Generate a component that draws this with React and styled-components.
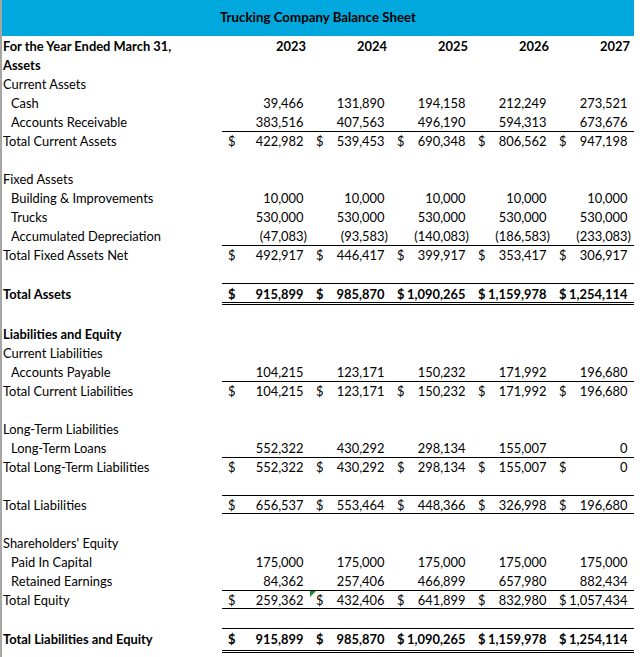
import React from "react";
import styled, { createGlobalStyle } from "styled-components";

const Global = createGlobalStyle`
  html, body { margin: 0; padding: 0; background: #ffffff; }
  body { font-family: Lato, "Open Sans", "Liberation Sans", sans-serif; color: #000; }
`;

const Sheet = styled.div`
  width: 632px;
  min-height: 657px;
  border-left: 2px solid #a6a6a6;
  font-size: 12.9px;
  line-height: 1;
`;

const TitleBar = styled.div`
  height: 36px;
  background: #00a8de;
  display: flex;
  align-items: center;
  justify-content: center;
  font-weight: 700;
  font-size: 13.3px;
  padding-bottom: 1px;
  box-sizing: border-box;
`;

const Row = styled.div`
  display: grid;
  grid-template-columns: 220px 88px repeat(4, 81px);
  height: ${(p) => p.$h || 19}px;
  font-weight: ${(p) => (p.$bold ? 700 : 400)};
`;

const Cell = styled.div`
  position: relative;
  box-sizing: border-box;
  display: flex;
  align-items: center;
  white-space: nowrap;
  padding-top: 2px;
  border-top: 1px solid ${(p) => (p.$top && p.$lined ? "#000" : "transparent")};
  border-bottom: ${(p) => (p.$bottom === "double" ? "3px double" : "1px solid")}
    ${(p) => (p.$bottom && p.$lined ? "#000" : "transparent")};
  padding-bottom: ${(p) => p.$pb || 0}px;
`;

const Label = styled(Cell)`
  padding-left: ${(p) => (p.$indent ? 9 : 1)}px;
`;

const YearCell = styled(Cell)`
  justify-content: flex-end;
  padding-right: 4px;
`;

const Amount = styled(Cell)`
  padding-left: 6px;
  padding-right: 3px;
`;

const Dollar = styled.span``;

const Num = styled.span`
  margin-left: auto;
`;

const Ghost = styled.span`
  visibility: hidden;
`;

const ErrorMark = styled.span`
  position: absolute;
  left: 0;
  top: 0;
  width: 0;
  height: 0;
  border-top: 6px solid #1f8a3c;
  border-right: 6px solid transparent;
`;

const years = [2023, 2024, 2025, 2026, 2027];

const rows = [
  { type: "header" },
  { label: "Assets", bold: true },
  { label: "Current Assets" },
  { label: "Cash", indent: true, values: ["39,466", "131,890", "194,158", "212,249", "273,521"] },
  { label: "Accounts Receivable", indent: true, values: ["383,516", "407,563", "496,190", "594,313", "673,676"] },
  { label: "Total Current Assets", top: true, dollar: true, values: ["422,982", "539,453", "690,348", "806,562", "947,198"] },
  {},
  { label: "Fixed Assets" },
  { label: "Building & Improvements", indent: true, values: ["10,000", "10,000", "10,000", "10,000", "10,000"] },
  { label: "Trucks", indent: true, values: ["530,000", "530,000", "530,000", "530,000", "530,000"] },
  { label: "Accumulated Depreciation", indent: true, values: ["(47,083)", "(93,583)", "(140,083)", "(186,583)", "(233,083)"] },
  { label: "Total Fixed Assets Net", top: true, dollar: true, values: ["492,917", "446,417", "399,917", "353,417", "306,917"] },
  {},
  { label: "Total Assets", bold: true, top: true, bottom: "double", h: 22, dollar: true, values: ["915,899", "985,870", "1,090,265", "1,159,978", "1,254,114"] },
  {},
  { label: "Liabilities and Equity", bold: true },
  { label: "Current Liabilities" },
  { label: "Accounts Payable", indent: true, values: ["104,215", "123,171", "150,232", "171,992", "196,680"] },
  { label: "Total Current Liabilities", top: true, dollar: true, values: ["104,215", "123,171", "150,232", "171,992", "196,680"] },
  {},
  { label: "Long-Term Liabilities" },
  { label: "Long-Term Loans", indent: true, values: ["552,322", "430,292", "298,134", "155,007", "0"] },
  { label: "Total Long-Term Liabilities", top: true, dollar: true, values: ["552,322", "430,292", "298,134", "155,007", "0"] },
  {},
  { label: "Total Liabilities", top: true, bottom: "single", dollar: true, values: ["656,537", "553,464", "448,366", "326,998", "196,680"] },
  {},
  { label: "Shareholders' Equity" },
  { label: "Paid In Capital", indent: true, values: ["175,000", "175,000", "175,000", "175,000", "175,000"] },
  { label: "Retained Earnings", indent: true, values: ["84,362", "257,406", "466,899", "657,980", "882,434"] },
  { label: "Total Equity", top: true, bottom: "single", dollar: true, mark: 1, values: ["259,362", "432,406", "641,899", "832,980", "1,057,434"] },
  {},
  { label: "Total Liabilities and Equity", bold: true, top: true, bottom: "double", h: 25, pb: 3, dollar: true, values: ["915,899", "985,870", "1,090,265", "1,159,978", "1,254,114"] },
];

function BalanceRow({ row }) {
  const border = { $top: row.top, $bottom: row.bottom, $pb: row.pb };
  if (row.type === "header") {
    return (
      <Row $bold>
        <Label>For the Year Ended March 31,</Label>
        {years.map((y) => (
          <YearCell key={y}>{y}</YearCell>
        ))}
      </Row>
    );
  }
  return (
    <Row $h={row.h} $bold={row.bold}>
      <Label $indent={row.indent} {...border}>
        {row.label}
      </Label>
      {years.map((y, i) => {
        const v = row.values ? row.values[i] : null;
        const negative = v && v.startsWith("(");
        return (
          <Amount key={y} {...border} $lined>
            {row.mark === i && <ErrorMark />}
            {v && row.dollar && <Dollar>$</Dollar>}
            {v && (
              <Num>
                {v}
                {!negative && <Ghost>)</Ghost>}
              </Num>
            )}
          </Amount>
        );
      })}
    </Row>
  );
}

export default function App() {
  return (
    <>
      <Global />
      <Sheet>
        <TitleBar>Trucking Company Balance Sheet</TitleBar>
        {rows.map((row, idx) => (
          <BalanceRow key={idx} row={row} />
        ))}
      </Sheet>
    </>
  );
}
